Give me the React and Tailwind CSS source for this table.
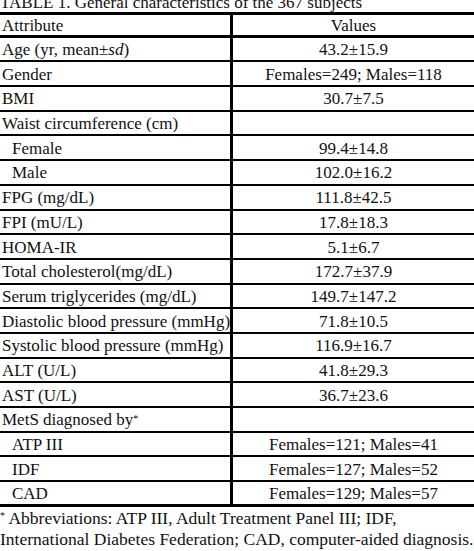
const rows = [
  { a: <>Age (yr, mean±<i>sd</i>)</>, v: "43.2±15.9" },
  { a: "Gender", v: "Females=249; Males=118" },
  { a: "BMI", v: "30.7±7.5" },
  { a: "Waist circumference (cm)", v: "" },
  { a: "Female", v: "99.4±14.8", ind: true },
  { a: "Male", v: "102.0±16.2", ind: true },
  { a: "FPG (mg/dL)", v: "111.8±42.5" },
  { a: "FPI (mU/L)", v: "17.8±18.3" },
  { a: "HOMA-IR", v: "5.1±6.7" },
  { a: "Total cholesterol(mg/dL)", v: "172.7±37.9" },
  { a: "Serum triglycerides (mg/dL)", v: "149.7±147.2" },
  { a: "Diastolic blood pressure (mmHg)", v: "71.8±10.5" },
  { a: "Systolic blood pressure (mmHg)", v: "116.9±16.7" },
  { a: "ALT (U/L)", v: "41.8±29.3" },
  { a: "AST (U/L)", v: "36.7±23.6" },
  { a: <>MetS diagnosed by<sup className="text-[10px] relative top-[-1px]">*</sup></>, v: "" },
  { a: "ATP III", v: "Females=121; Males=41", ind: true },
  { a: "IDF", v: "Females=127; Males=52", ind: true },
  { a: "CAD", v: "Females=129; Males=57", ind: true },
];

export default function App() {
  return (
    <div className="w-[474px] h-[551px] overflow-hidden bg-white text-[#111] font-['Liberation_Serif',serif] text-[17px] leading-none">
      <div className="h-[12px] overflow-hidden relative">
        <div className="absolute left-0 bottom-[1px] whitespace-nowrap text-[17px] leading-none">
          TABLE 1. General characteristics of the 367 subjects
        </div>
      </div>
      <div className="border-t-[3px] border-black">
        <div className="grid grid-cols-[233px_1fr] h-[22.7px] border-b-[3px] border-black">
          <div className="border-r-[3px] border-black pl-[2px] flex items-center pt-[1px]">Attribute</div>
          <div className="flex items-center justify-center pt-[1px]">Values</div>
        </div>
        {rows.map((r, i) => (
          <div
            key={i}
            className={
              "grid grid-cols-[233px_1fr] border-black " +
              (i === rows.length - 1 ? "h-[25px] border-b-[3px]" : "h-[24.7px] border-b-2")
            }
          >
            <div className={"border-r-[3px] border-black flex items-center pt-[1px] whitespace-nowrap " + (r.ind ? "pl-[12px]" : "pl-[2px]")}>
              {r.a}
            </div>
            <div className="flex items-center justify-center pt-[1px] whitespace-nowrap">{r.v}</div>
          </div>
        ))}
      </div>
      <div className="pt-[1px] text-[17.5px] leading-[21px] whitespace-nowrap">
        <div><sup className="text-[10px]">*</sup> Abbreviations: ATP III, Adult Treatment Panel III; IDF,</div>
        <div>International Diabetes Federation; CAD, computer-aided diagnosis.</div>
      </div>
    </div>
  );
}
